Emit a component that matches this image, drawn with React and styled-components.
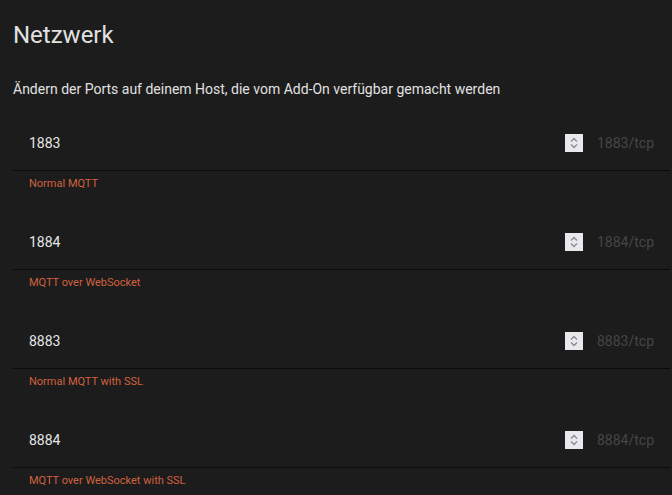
import React from "react";
import styled, { createGlobalStyle } from "styled-components";

const GlobalStyle = createGlobalStyle`
  html, body {
    margin: 0;
    padding: 0;
    background: #1c1c1c;
    font-family: Roboto, "Noto Sans", sans-serif;
  }
`;

const Page = styled.div`
  width: 672px;
  height: 495px;
  overflow: hidden;
  padding: 0 2px 0 13px;
  box-sizing: border-box;
  background: #1c1c1c;
`;

const Title = styled.h1`
  margin: 0;
  padding-top: 20px;
  font-size: 24px;
  font-weight: 400;
  line-height: 30px;
  color: #e1e1e1;
`;

const Description = styled.p`
  margin: 29px 0 16px;
  font-size: 14px;
  line-height: 20px;
  color: #e1e1e1;
`;

const PortList = styled.div`
  display: flex;
  flex-direction: column;
`;

const PortBlock = styled.div`
  display: flex;
  flex-direction: column;
  margin-bottom: 24px;
`;

const Field = styled.div`
  height: 56px;
  display: flex;
  align-items: center;
  padding: 0 16px;
  box-sizing: border-box;
  border-bottom: 1px solid #0b0b0b;
`;

const Value = styled.span`
  flex: 1;
  font-size: 14px;
  color: #e6e6e6;
  padding-top: 1px;
`;

const Spinner = styled.span`
  width: 18px;
  height: 18px;
  background: #e9e9ed;
  display: flex;
  align-items: center;
  justify-content: center;
  margin-right: 14px;
`;

const Suffix = styled.span`
  font-size: 14px;
  color: #464646;
`;

const Helper = styled.div`
  padding: 6px 16px 0;
  font-size: 11px;
  line-height: 13px;
  color: #d2613f;
`;

const ports = [
  { value: "1883", label: "Normal MQTT" },
  { value: "1884", label: "MQTT over WebSocket" },
  { value: "8883", label: "Normal MQTT with SSL" },
  { value: "8884", label: "MQTT over WebSocket with SSL" },
];

function SpinIcon() {
  return (
    <svg width="10" height="14" viewBox="0 0 10 14" fill="none" stroke="#8c8c90" strokeWidth="1.4">
      <path d="M2 5.5 L5 2.5 L8 5.5" />
      <path d="M2 8.5 L5 11.5 L8 8.5" />
    </svg>
  );
}

export default function App() {
  return (
    <>
      <GlobalStyle />
      <Page>
        <Title>Netzwerk</Title>
        <Description>
          Ändern der Ports auf deinem Host, die vom Add-On verfügbar gemacht werden
        </Description>
        <PortList>
          {ports.map((p) => (
            <PortBlock key={p.value}>
              <Field>
                <Value>{p.value}</Value>
                <Spinner>
                  <SpinIcon />
                </Spinner>
                <Suffix>{p.value}/tcp</Suffix>
              </Field>
              <Helper>{p.label}</Helper>
            </PortBlock>
          ))}
        </PortList>
      </Page>
    </>
  );
}
